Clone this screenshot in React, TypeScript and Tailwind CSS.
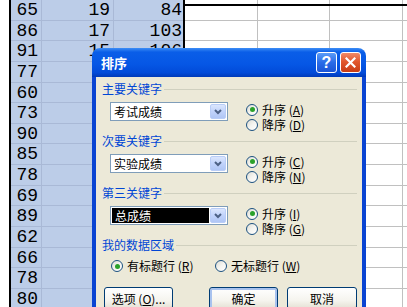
import type { ReactNode } from "react";

const colA = ["65", "86", "91", "77", "60", "73", "90", "85", "78", "69", "89", "62", "66", "78", "80"];
const colB = ["19", "17", "15"];
const colC = ["84", "103", "106"];
const rowH = [
  "h-[21px]", "h-[20px]", "h-[21px]", "h-[21px]", "h-[20px]",
  "h-[21px]", "h-[20px]", "h-[21px]", "h-[21px]", "h-[20px]",
  "h-[21px]", "h-[21px]", "h-[20px]", "h-[21px]", "h-[21px]",
];

function Radio({ checked, children }: { checked?: boolean; children: ReactNode }) {
  return (
    <div className="flex items-center">
      <div className="flex h-[12px] w-[12px] items-center justify-center rounded-full border border-[#1c5180] bg-[linear-gradient(135deg,#dcdcd4_0%,#f4f4f0_50%,#ffffff_100%)]">
        {checked && <div className="h-[5px] w-[5px] rounded-full bg-[#2aa12a]" />}
      </div>
      <span className="ml-[4px] text-[12px] leading-[14px] text-black">{children}</span>
    </div>
  );
}

function Select({ value, selected }: { value: string; selected?: boolean }) {
  return (
    <div className="flex h-[19px] w-[118px] border border-[#7f9db9] bg-white p-[1px]">
      <div
        className={
          selected
            ? "flex flex-1 items-center bg-black pl-[3px] text-[12px] leading-none text-white"
            : "flex flex-1 items-center pl-[2px] text-[12px] leading-none text-black"
        }
      >
        {value}
      </div>
      <div className="ml-[1px] flex w-[16px] items-center justify-center rounded-[2px] border border-[#b9cdf7] bg-[linear-gradient(180deg,#dbe6fd_0%,#c1d3fb_50%,#b0c6f5_100%)]">
        <svg width="8" height="6" viewBox="0 0 8 6">
          <polyline points="1,1 4,4 7,1" fill="none" stroke="#4d6185" strokeWidth="2" />
        </svg>
      </div>
    </div>
  );
}

function GroupLabel({ children }: { children: ReactNode }) {
  return (
    <div className="flex h-[14px] items-center">
      <span className="text-[12px] leading-[14px] text-[#0046d5]">{children}</span>
      <div className="ml-[2px] h-px flex-1 bg-[#d0d0bf]" />
    </div>
  );
}

function KeyGroup({ label, value, up, down, selected }: { label: string; value: string; up: string; down: string; selected?: boolean }) {
  return (
    <div className="h-[52px]">
      <GroupLabel>{label}</GroupLabel>
      <div className="mt-[6px] flex">
        <div className="ml-[8px]">
          <Select value={value} selected={selected} />
        </div>
        <div className="ml-[18px] flex flex-col">
          <div className="flex h-[15px] items-center">
            <Radio checked>
              升序 (<u>{up}</u>)
            </Radio>
          </div>
          <div className="flex h-[15px] items-center">
            <Radio>
              降序 (<u>{down}</u>)
            </Radio>
          </div>
        </div>
      </div>
    </div>
  );
}

function XpButton({ children, def, w }: { children: ReactNode; def?: boolean; w: string }) {
  return (
    <div
      className={`${w} flex h-[23px] items-center justify-center rounded-[3px] border border-[#003c74] bg-[linear-gradient(180deg,#ffffff_0%,#f5f4ee_60%,#e3e0d2_100%)] text-[12px] leading-none text-black ${
        def ? "shadow-[inset_0_0_0_2px_#a8c2ee]" : "shadow-[inset_0_-2px_0_#d8d2bd]"
      }`}
    >
      {children}
    </div>
  );
}

export default function App() {
  return (
    <div className="relative h-[307px] w-[407px] overflow-hidden bg-white font-['Noto_Sans_CJK_SC','Noto_Sans',sans-serif]">
      {/* spreadsheet behind the dialog */}
      <div className="flex font-['Liberation_Mono',monospace] text-[18px] leading-none text-black">
        <div className="w-[9px]" />
        <div className="w-[176px] border-x-2 border-black bg-[#bccde8]">
          {colA.map((a, i) => (
            <div key={i} className={`${rowH[i]} flex border-b border-[#a9b9d6]`}>
              <div className="flex w-[31px] items-center justify-end border-r border-[#a9b9d6] pr-[3px]">{a}</div>
              <div className="flex w-[72px] items-center justify-end border-r border-[#a9b9d6] pr-[3px]">{colB[i] ?? ""}</div>
              <div className="flex flex-1 items-center justify-end pr-[1px]">{colC[i] ?? ""}</div>
            </div>
          ))}
        </div>
        <div className="relative flex-1">
          {colA.map((_, i) => (
            <div key={i} className={`${rowH[i]} flex border-b border-[#c0c0c0]`}>
              <div className="w-[73px] border-r border-[#c0c0c0]" />
              <div className="w-[72px] border-r border-[#c0c0c0]" />
              <div className="w-[73px] border-r border-[#c0c0c0]" />
              <div className="flex-1" />
            </div>
          ))}
          <div className="absolute left-0 right-0 top-[4px] h-[2px] bg-black" />
        </div>
      </div>

      {/* sort dialog */}
      <div className="absolute left-[92px] top-[48px] w-[274px]">
        <div className="flex h-[29px] items-center rounded-t-[8px] bg-[linear-gradient(180deg,#3d8df5_0%,#0a5ee8_14%,#0657e5_55%,#024bd9_85%,#003ab8_100%)] pl-[9px] pr-[5px]">
          <span className="text-[13px] font-bold leading-none text-white">排序</span>
          <div className="ml-auto flex gap-[3px]">
            <div className="flex h-[21px] w-[21px] items-center justify-center rounded-[3px] border border-white bg-[linear-gradient(180deg,#5a9cf8_0%,#2a6ce8_50%,#1b55d6_100%)] font-['Liberation_Sans',sans-serif] text-[16px] font-bold leading-none text-white">
              ?
            </div>
            <div className="flex h-[21px] w-[21px] items-center justify-center rounded-[3px] border border-white bg-[linear-gradient(180deg,#f08a68_0%,#e2572d_45%,#c83c14_100%)]">
              <svg width="11" height="11" viewBox="0 0 11 11">
                <path d="M1.5 1.5 L9.5 9.5 M9.5 1.5 L1.5 9.5" stroke="white" strokeWidth="2.2" strokeLinecap="square" />
              </svg>
            </div>
          </div>
        </div>
        <div className="h-[240px] border-x-4 border-[#0a44d2] bg-[#ece9d8] pl-[6px] pr-[5px] pt-[5px]">
          <KeyGroup label="主要关键字" value="考试成绩" up="A" down="D" />
          <KeyGroup label="次要关键字" value="实验成绩" up="C" down="N" />
          <KeyGroup label="第三关键字" value="总成绩" up="I" down="G" selected />
          <GroupLabel>我的数据区域</GroupLabel>
          <div className="mt-[7px] flex h-[14px] items-center pl-[9px]">
            <div className="w-[104px]">
              <Radio checked>
                有标题行 (<u>R</u>)
              </Radio>
            </div>
            <Radio>
              无标题行 (<u>W</u>)
            </Radio>
          </div>
          <div className="mt-[14px] flex pl-[2px]">
            <XpButton w="w-[69px]">
              选项 (<u>O</u>)...
            </XpButton>
            <div className="ml-[36px]">
              <XpButton w="w-[69px]" def>
                确定
              </XpButton>
            </div>
            <div className="ml-[9px]">
              <XpButton w="w-[70px]">取消</XpButton>
            </div>
          </div>
        </div>
      </div>
    </div>
  );
}
